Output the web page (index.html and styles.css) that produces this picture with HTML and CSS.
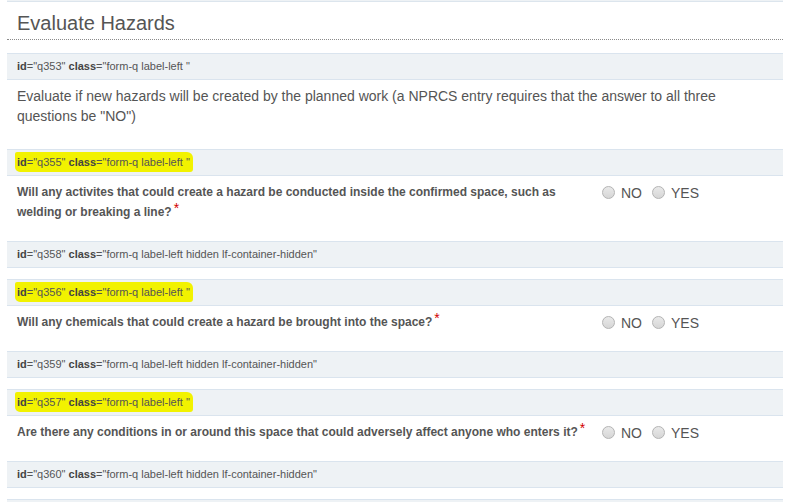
FILE: index.html
```html
<!DOCTYPE html>
<html>
<head>
<meta charset="utf-8">
<link rel="stylesheet" href="styles.css">
</head>
<body>
<div class="page">
  <div class="top-strip"></div>
  <h2 class="section-title">Evaluate Hazards</h2>

  <div class="q">
    <div class="qlabel"><b>id</b>="q353" <b>class</b>="form-q label-left "</div>
    <div class="intro">Evaluate if new hazards will be created by the planned work (a NPRCS entry requires that the answer to all three questions be "NO")</div>
  </div>

  <div class="q">
    <div class="qlabel"><span class="hl"><b>id</b>="q355" <b>class</b>="form-q label-left "</span></div>
    <div class="qrow">
      <div class="qtext">Will any activites that could create a hazard be conducted inside the confirmed space, such as welding or breaking a line?<sup class="req">*</sup></div>
      <div class="radios"><span class="radio"></span><span class="opt">NO</span><span class="radio"></span><span class="opt">YES</span></div>
    </div>
  </div>

  <div class="q hidden-q">
    <div class="qlabel"><b>id</b>="q358" <b>class</b>="form-q label-left hidden lf-container-hidden"</div>
  </div>

  <div class="q">
    <div class="qlabel"><span class="hl"><b>id</b>="q356" <b>class</b>="form-q label-left "</span></div>
    <div class="qrow">
      <div class="qtext">Will any chemicals that could create a hazard be brought into the space?<sup class="req">*</sup></div>
      <div class="radios"><span class="radio"></span><span class="opt">NO</span><span class="radio"></span><span class="opt">YES</span></div>
    </div>
  </div>

  <div class="q hidden-q">
    <div class="qlabel"><b>id</b>="q359" <b>class</b>="form-q label-left hidden lf-container-hidden"</div>
  </div>

  <div class="q">
    <div class="qlabel"><span class="hl"><b>id</b>="q357" <b>class</b>="form-q label-left "</span></div>
    <div class="qrow">
      <div class="qtext">Are there any conditions in or around this space that could adversely affect anyone who enters it?<sup class="req">*</sup></div>
      <div class="radios"><span class="radio"></span><span class="opt">NO</span><span class="radio"></span><span class="opt">YES</span></div>
    </div>
  </div>

  <div class="q hidden-q">
    <div class="qlabel"><b>id</b>="q360" <b>class</b>="form-q label-left hidden lf-container-hidden"</div>
  </div>

  <div class="q hidden-q">
    <div class="qlabel"></div>
  </div>
</div>
</body>
</html>
```

FILE: styles.css
```css
html, body {
  margin: 0;
  padding: 0;
  background: #fff;
}
body {
  font-family: "Liberation Sans", Arial, sans-serif;
  color: #555;
}
.page {
  margin-left: 7px;
  width: 776px;
}
.top-strip {
  height: 1px;
  background: #eef2f5;
  border-bottom: 1px solid #dce5ed;
}
.section-title {
  margin: 0 0 13px 0;
  padding: 7px 0 0 10px;
  height: 30px;
  font-size: 20px;
  font-weight: normal;
  line-height: 28px;
  color: #555;
  border-bottom: 1px dotted #8a8a8a;
}
.qlabel {
  height: 25px;
  line-height: 25px;
  background: #eef2f5;
  border-top: 1px solid #dae4ee;
  border-bottom: 1px solid #dae4ee;
  padding-left: 10px;
  font-size: 11px;
  color: #555;
  white-space: nowrap;
}
.qlabel b {
  font-weight: bold;
  color: #444;
}
.hl {
  background: #f2f200;
  padding: 4px 3px 4px 2px;
  margin-left: -2px;
  border-radius: 2px 6px 3px 5px;
}
.intro {
  padding: 6px 60px 23px 10px;
  font-size: 14px;
  line-height: 20px;
  color: #555;
}
.qrow {
  display: grid;
  grid-template-columns: 585px auto;
  align-items: start;
  padding: 6px 0 19px 10px;
}
.qtext {
  font-size: 12px;
  font-weight: bold;
  line-height: 20px;
  color: #555;
}
.req {
  color: #d20000;
  font-size: 14px;
  font-weight: normal;
  line-height: 0;
  vertical-align: 3px;
  margin-left: 2px;
}
.radios {
  display: flex;
  align-items: center;
  height: 19px;
  margin-top: 1px;
  font-size: 14px;
  color: #555;
}
.radio {
  box-sizing: border-box;
  width: 13px;
  height: 13px;
  border-radius: 50%;
  border: 1px solid #b4b4b4;
  background: linear-gradient(#e9e9e9, #d6d6d6);
  margin-right: 6px;
}
.opt {
  margin-right: 10px;
}
.hidden-q {
  margin-bottom: 11px;
}
```
